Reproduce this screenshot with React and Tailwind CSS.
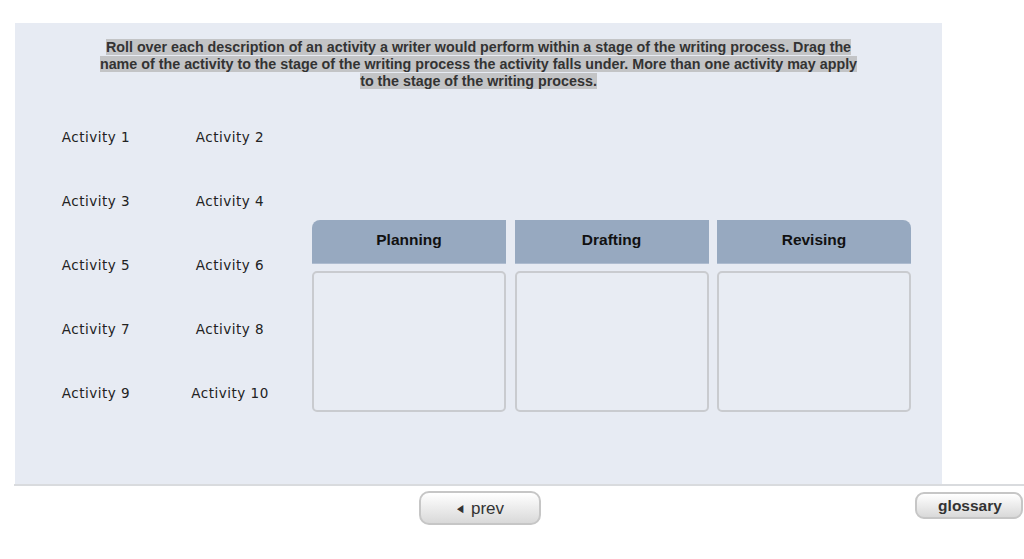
import React from 'react'

const activities = [
  ['Activity 1', 'Activity 2'],
  ['Activity 3', 'Activity 4'],
  ['Activity 5', 'Activity 6'],
  ['Activity 7', 'Activity 8'],
  ['Activity 9', 'Activity 10'],
]

const stages = ['Planning', 'Drafting', 'Revising']

function StageColumn({ name, index }) {
  const corner = index === 0 ? 'rounded-tl-[8px]' : index === 2 ? 'rounded-tr-[8px]' : ''
  return (
    <div className="flex flex-col gap-[7px]">
      <div className={`h-[44px] bg-[#97a9c0] border-b border-[#aebcd0] flex justify-center pt-[11px] ${corner}`}>
        <span className="font-['Liberation_Sans',Arial,sans-serif] font-bold text-[15.5px] leading-[18px] text-[#111]">{name}</span>
      </div>
      <div className="h-[141px] border-2 border-[#c9cbcf] rounded-[5px] bg-[#e8ecf3]"></div>
    </div>
  )
}

export default function App() {
  return (
    <div className="w-[1024px] h-[559px] bg-white overflow-hidden">
      <div className="ml-[15px] pt-[23px]">
        <div className="w-[927px] h-[461px] bg-[#e7ebf3] pt-[16px]">
          <p className="mx-auto w-[770px] text-center font-['Liberation_Sans',Arial,sans-serif] font-bold text-[14.3px] leading-[17px] text-[#333]">
            <span className="bg-[#c3c4c6]">
              Roll over each description of an activity a writer would perform within a stage of the writing process. Drag the name of the activity to the stage of the writing process the activity falls under. More than one activity may apply to the stage of the writing process.
            </span>
          </p>

          <div className="flex mt-[15px]">
            <div className="ml-[14px] w-[268px]">
              {activities.map((row, i) => (
                <div key={i} className="grid grid-cols-2 h-[64px] items-center">
                  {row.map((a) => (
                    <div key={a} className="text-center font-['DejaVu_Sans',Verdana,sans-serif] text-[13.5px] tracking-[0.5px] text-[#222]">
                      {a}
                    </div>
                  ))}
                </div>
              ))}
            </div>

            <div className="ml-[15px] mt-[115px] w-[599px] grid grid-cols-3 gap-x-[8.5px]">
              {stages.map((s, i) => (
                <StageColumn key={s} name={s} index={i} />
              ))}
            </div>
          </div>
        </div>
      </div>

      <div className="ml-[14px] border-t-2 border-[#d9dbde]"></div>

      <div className="relative h-[70px]">
        <button className="absolute left-[419px] top-[5px] w-[122px] h-[34px] rounded-[10px] border-2 border-[#c6c6c6] bg-gradient-to-b from-white to-[#d9d9d9] flex items-center justify-center gap-[7px] font-['Liberation_Sans',Arial,sans-serif] text-[17px] text-[#333]">
          <span className="text-[11px] leading-none scale-x-75">◀</span>
          <span className="leading-none">prev</span>
        </button>
        <button className="absolute left-[915px] top-[6px] w-[108px] h-[27px] rounded-[9px] border-2 border-[#c6c6c6] bg-gradient-to-b from-white to-[#d9d9d9] flex items-center justify-center pl-[2px] font-['Liberation_Sans',Arial,sans-serif] font-bold text-[15.5px] text-[#333]">
          glossary
        </button>
      </div>
    </div>
  )
}
